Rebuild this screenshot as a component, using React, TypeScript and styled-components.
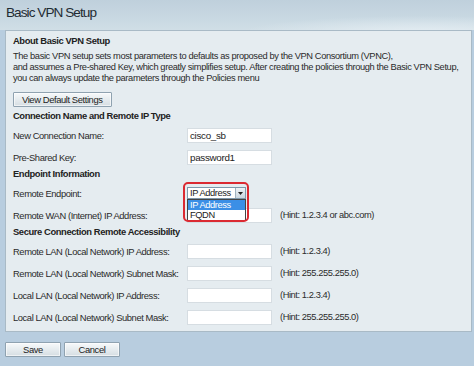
import { FC } from 'react'
import styled, { createGlobalStyle } from 'styled-components'

const GlobalStyle = createGlobalStyle`
  html, body {
    margin: 0;
    padding: 0;
  }
  body {
    font-family: "Liberation Sans", Arial, sans-serif;
    color: #333;
  }
`

const Page = styled.div`
  width: 474px;
  height: 366px;
  overflow: hidden;
  background: #b8cddf;
  display: flex;
  flex-direction: column;
`

const Header = styled.div`
  height: 30px;
  box-sizing: border-box;
  padding: 4px 6px 0;
  background:
    radial-gradient(ellipse 260px 26px at 420px 34px, rgba(232,240,245,0.9), rgba(232,240,245,0) 70%),
    linear-gradient(180deg, #bfd0dc 0%, #c8d8e2 60%, #d0dee6 100%);
`

const Title = styled.h1`
  margin: 0;
  font-size: 13.6px;
  font-weight: normal;
  letter-spacing: -0.95px;
  line-height: 17px;
  color: #1f2b33;
`

const Panel = styled.div`
  margin: 0 2px 0 5px;
  height: 302px;
  box-sizing: border-box;
  padding: 4px 8px 3px 7px;
  background: #e5ecf0;
  border: 1px solid #a9bac6;
  display: flex;
  flex-direction: column;
`

const SectionTitle = styled.div<{ $first?: boolean }>`
  font-size: 9.4px;
  font-weight: bold;
  letter-spacing: -0.4px;
  line-height: 12px;
  padding-bottom: ${p => (p.$first ? 4 : 2)}px;
  color: #222;
`

const Paragraph = styled.p`
  margin: 0;
  font-size: 9.3px;
  letter-spacing: -0.38px;
  line-height: 11px;
  color: #2a2a2a;
`

const Button = styled.button<{ $w?: number }>`
  width: ${p => (p.$w ? `${p.$w}px` : 'auto')};
  height: 15px;
  padding: 0 8px;
  font-family: "Liberation Sans", Arial, sans-serif;
  font-size: 9.4px;
  letter-spacing: -0.4px;
  color: #222;
  background: linear-gradient(180deg, #f7f9fa 0%, #e6ecef 50%, #d5dde2 100%);
  border: 1px solid #8fa2b0;
  border-radius: 1px;
  box-shadow: inset 0 0 0 1px rgba(255,255,255,0.6);
`

const ButtonWrap = styled.div`
  margin: 5px 0 3px 0;
`

const Row = styled.div`
  height: 22px;
  display: grid;
  grid-template-columns: 174px 85px auto;
  align-items: center;
`

const Label = styled.span`
  font-size: 9.4px;
  letter-spacing: -0.42px;
  color: #2a2a2a;
  white-space: nowrap;
`

const Input = styled.div`
  height: 15px;
  box-sizing: border-box;
  background: #fff;
  border: 1px solid #d6dde2;
  padding: 0 2px;
  font-size: 9.8px;
  letter-spacing: -0.3px;
  line-height: 13px;
  color: #222;
`

const Hint = styled.span`
  margin-left: 8px;
  font-size: 9.3px;
  letter-spacing: -0.42px;
  color: #2a2a2a;
  white-space: nowrap;
`

const SelectWrap = styled.div`
  position: relative;
  width: 59px;
`

const Select = styled.div`
  height: 12px;
  box-sizing: border-box;
  display: flex;
  align-items: center;
  background: #fff;
  border: 1px solid #7e98ab;
  font-size: 9.3px;
  letter-spacing: -0.4px;
  color: #222;
  span {
    flex: 1;
    padding-left: 2px;
    line-height: 10px;
  }
`

const Arrow = styled.div`
  width: 9px;
  height: 10px;
  background: linear-gradient(180deg, #eef3f7, #c9d6e0);
  border-left: 1px solid #9fb2c0;
  display: flex;
  align-items: center;
  justify-content: center;
`

const Options = styled.div`
  position: absolute;
  left: 0;
  top: 12px;
  width: 59px;
  box-sizing: border-box;
  border: 1px solid #444;
  background: #fff;
  z-index: 2;
`

const Option = styled.div<{ $active?: boolean }>`
  height: 10px;
  line-height: 10px;
  padding-left: 2px;
  font-size: 9.3px;
  letter-spacing: -0.4px;
  background: ${p => (p.$active ? '#3b8fe6' : '#fff')};
  color: ${p => (p.$active ? '#fff' : '#222')};
`

const Highlight = styled.div`
  position: absolute;
  left: -4px;
  top: -5px;
  width: 66px;
  height: 40px;
  box-sizing: border-box;
  border: 2px solid #db2a32;
  border-radius: 5px;
  z-index: 3;
  pointer-events: none;
`

const Footer = styled.div`
  display: flex;
  gap: 3px;
  padding: 10px 0 0 5px;
`

type Field = { label: string; value?: string; hint?: string }

const connection: Field[] = [
  { label: 'New Connection Name:', value: 'cisco_sb' },
  { label: 'Pre-Shared Key:', value: 'password1' },
]

const secure: Field[] = [
  { label: 'Remote LAN (Local Network) IP Address:', hint: '(Hint: 1.2.3.4)' },
  { label: 'Remote LAN (Local Network) Subnet Mask:', hint: '(Hint: 255.255.255.0)' },
  { label: 'Local LAN (Local Network) IP Address:', hint: '(Hint: 1.2.3.4)' },
  { label: 'Local LAN (Local Network) Subnet Mask:', hint: '(Hint: 255.255.255.0)' },
]

const FieldRow: FC<{ f: Field }> = ({ f }) => (
  <Row>
    <Label>{f.label}</Label>
    <Input>{f.value}</Input>
    {f.hint ? <Hint>{f.hint}</Hint> : <span />}
  </Row>
)

const App: FC = () => {
  return (
    <>
      <GlobalStyle />
      <Page>
        <Header>
          <Title>Basic VPN Setup</Title>
        </Header>
        <Panel>
          <SectionTitle $first>About Basic VPN Setup</SectionTitle>
          <Paragraph>
            The basic VPN setup sets most parameters to defaults as proposed by the VPN Consortium (VPNC),
            <br />
            and assumes a Pre-shared Key, which greatly simplifies setup. After creating the policies through the Basic VPN Setup,
            <br />
            you can always update the parameters through the Policies menu
          </Paragraph>
          <ButtonWrap>
            <Button>View Default Settings</Button>
          </ButtonWrap>
          <SectionTitle>Connection Name and Remote IP Type</SectionTitle>
          {connection.map(f => <FieldRow key={f.label} f={f} />)}
          <SectionTitle>Endpoint Information</SectionTitle>
          <Row>
            <Label>Remote Endpoint:</Label>
            <SelectWrap>
              <Select>
                <span>IP Address</span>
                <Arrow>
                  <svg width="5" height="3" viewBox="0 0 5 3">
                    <polygon points="0,0 5,0 2.5,3" fill="#222" />
                  </svg>
                </Arrow>
              </Select>
              <Options>
                <Option $active>IP Address</Option>
                <Option>FQDN</Option>
              </Options>
              <Highlight />
            </SelectWrap>
            <span />
          </Row>
          <FieldRow f={{ label: 'Remote WAN (Internet) IP Address:', hint: '(Hint: 1.2.3.4 or abc.com)' }} />
          <SectionTitle>Secure Connection Remote Accessibility</SectionTitle>
          {secure.map(f => <FieldRow key={f.label} f={f} />)}
        </Panel>
        <Footer>
          <Button $w={56}>Save</Button>
          <Button $w={56}>Cancel</Button>
        </Footer>
      </Page>
    </>
  )
}

export default App
